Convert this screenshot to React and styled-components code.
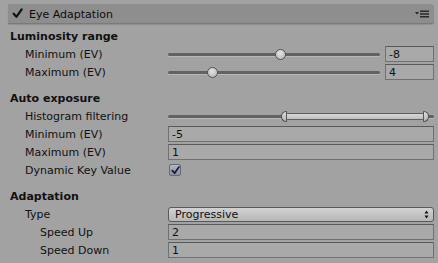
import styled, { createGlobalStyle } from 'styled-components';

const GlobalStyle = createGlobalStyle`
  html, body {
    margin: 0;
    padding: 0;
    background: #a2a2a2;
    font-family: 'DejaVu Sans', Verdana, sans-serif;
    font-size: 11px;
    color: #111;
  }
`;

const Panel = styled.div`
  width: 438px;
  height: 263px;
  padding: 4px 4px 0 8px;
  box-sizing: border-box;
  background: #a2a2a2;
  overflow: hidden;
`;

const HeaderBar = styled.div`
  height: 19px;
  display: flex;
  align-items: center;
  padding: 0 5px 0 4px;
  background: #8e8e8e;
  border-radius: 0 3px 3px 0;
  box-shadow: 0 1px 0 #7a7a7a, 0 2px 1px rgba(0, 0, 0, 0.12);
  color: #0d0d0d;
  gap: 6px;
`;

const HeaderTitle = styled.span`
  flex: 1;
  font-size: 11px;
  padding-top: 1px;
`;

const Body = styled.div`
  display: flex;
  flex-direction: column;
  padding-top: 4px;
`;

const SectionTitle = styled.div`
  height: 18px;
  display: flex;
  align-items: center;
  padding-left: 2px;
  font-weight: bold;
  margin-top: ${(p) => (p.$first ? '0' : '8px')};
`;

const Row = styled.div`
  height: 18px;
  display: flex;
  align-items: center;
`;

const Label = styled.div`
  width: ${(p) => 160 - p.$indent}px;
  padding-left: ${(p) => p.$indent}px;
  flex-shrink: 0;
`;

const Control = styled.div`
  flex: 1;
  display: flex;
  align-items: center;
  gap: 5px;
  height: 100%;
`;

const TrackWrap = styled.div`
  position: relative;
  flex: 1;
  height: 100%;
`;

const Track = styled.div`
  position: absolute;
  left: 0;
  right: 0;
  top: 8px;
  height: 3px;
  background: #626262;
  border-radius: 2px;
  box-shadow: 0 1px 0 #b8b8b8;
`;

const Thumb = styled.div`
  position: absolute;
  top: 4px;
  width: 11px;
  height: 11px;
  margin-left: -6px;
  border-radius: 50%;
  box-sizing: border-box;
  border: 1px solid #555;
  background: radial-gradient(circle at 45% 35%, #e4e4e4 0%, #c4c4c4 60%, #a8a8a8 100%);
`;

const RangeBar = styled.div`
  position: absolute;
  top: 6px;
  height: 7px;
  box-sizing: border-box;
  border: 1px solid #5e5e5e;
  border-radius: 4px;
  background: linear-gradient(#d6d6d6, #c0c0c0);
`;

const RangeCap = styled.div`
  position: absolute;
  top: 4px;
  width: 6px;
  height: 11px;
  box-sizing: border-box;
  border: 1px solid #555;
  background: linear-gradient(#dcdcdc, #b4b4b4);
  border-radius: ${(p) => (p.$side === 'left' ? '6px 1px 1px 6px' : '1px 6px 6px 1px')};
  margin-left: ${(p) => (p.$side === 'left' ? '-3px' : '-3px')};
`;

const Field = styled.div`
  height: 16px;
  box-sizing: border-box;
  width: ${(p) => (p.$small ? '49px' : '100%')};
  flex-shrink: 0;
  border: 1px solid #707070;
  border-top-color: #5a5a5a;
  background: #a9a9a9;
  padding: 0 3px;
  display: flex;
  align-items: center;
  font-size: 11px;
`;

const Dropdown = styled.div`
  width: 100%;
  height: 15px;
  box-sizing: border-box;
  border: 1px solid #5a5a5a;
  border-radius: 3px;
  background: linear-gradient(#d2d2d2, #b6b6b6);
  display: flex;
  align-items: center;
  justify-content: space-between;
  padding: 0 4px 0 6px;
  font-size: 11px;
`;

const CheckBox = styled.div`
  width: 12px;
  height: 12px;
  box-sizing: border-box;
  border: 1px solid #6a6a72;
  border-radius: 2px;
  background: linear-gradient(#b4b6c2, #8e909e);
  display: flex;
  align-items: center;
  justify-content: center;
  margin-left: 1px;
`;

const Check = ({ size = 10, color = '#111' }) => (
  <svg width={size} height={size} viewBox="0 0 10 10">
    <path d="M1.5 5.2 L4 8 L8.8 1.2" fill="none" stroke={color} strokeWidth="2" strokeLinecap="round" strokeLinejoin="round" />
  </svg>
);

const MenuIcon = () => (
  <svg width="14" height="8" viewBox="0 0 14 8">
    <path d="M0 2 L4 2 L2 4.5 Z" fill="#222" />
    <rect x="5" y="0.5" width="9" height="1.4" fill="#222" />
    <rect x="5" y="3.3" width="9" height="1.4" fill="#222" />
    <rect x="5" y="6.1" width="9" height="1.4" fill="#222" />
  </svg>
);

const UpDown = () => (
  <svg width="5" height="9" viewBox="0 0 5 9">
    <path d="M2.5 0.5 L4.5 3.5 L0.5 3.5 Z M2.5 8.5 L4.5 5.5 L0.5 5.5 Z" fill="#111" />
  </svg>
);

function SliderRow({ label, value, pos }) {
  return (
    <Row>
      <Label $indent={17}>{label}</Label>
      <Control>
        <TrackWrap>
          <Track />
          <Thumb style={{ left: `${pos * 100}%` }} />
        </TrackWrap>
        <Field $small>{value}</Field>
      </Control>
    </Row>
  );
}

function FieldRow({ label, value, indent = 17 }) {
  return (
    <Row>
      <Label $indent={indent}>{label}</Label>
      <Control>
        <Field>{value}</Field>
      </Control>
    </Row>
  );
}

export default function App() {
  const rangeMin = 0.435;
  const rangeMax = 0.97;
  return (
    <Panel>
      <GlobalStyle />
      <HeaderBar>
        <Check size={11} color="#111" />
        <HeaderTitle>Eye Adaptation</HeaderTitle>
        <MenuIcon />
      </HeaderBar>
      <Body>
        <SectionTitle $first>Luminosity range</SectionTitle>
        <SliderRow label="Minimum (EV)" value="-8" pos={0.533} />
        <SliderRow label="Maximum (EV)" value="4" pos={0.212} />

        <SectionTitle>Auto exposure</SectionTitle>
        <Row>
          <Label $indent={17}>Histogram filtering</Label>
          <Control>
            <TrackWrap>
              <Track />
              <RangeBar style={{ left: `${rangeMin * 100}%`, width: `${(rangeMax - rangeMin) * 100}%` }} />
              <RangeCap $side="left" style={{ left: `${rangeMin * 100}%` }} />
              <RangeCap $side="right" style={{ left: `${rangeMax * 100}%` }} />
            </TrackWrap>
          </Control>
        </Row>
        <FieldRow label="Minimum (EV)" value="-5" />
        <FieldRow label="Maximum (EV)" value="1" />
        <Row>
          <Label $indent={17}>Dynamic Key Value</Label>
          <Control>
            <CheckBox>
              <Check size={9} color="#14203a" />
            </CheckBox>
          </Control>
        </Row>

        <SectionTitle>Adaptation</SectionTitle>
        <Row>
          <Label $indent={17}>Type</Label>
          <Control>
            <Dropdown>
              <span>Progressive</span>
              <UpDown />
            </Dropdown>
          </Control>
        </Row>
        <FieldRow label="Speed Up" value="2" indent={32} />
        <FieldRow label="Speed Down" value="1" indent={32} />
      </Body>
    </Panel>
  );
}
